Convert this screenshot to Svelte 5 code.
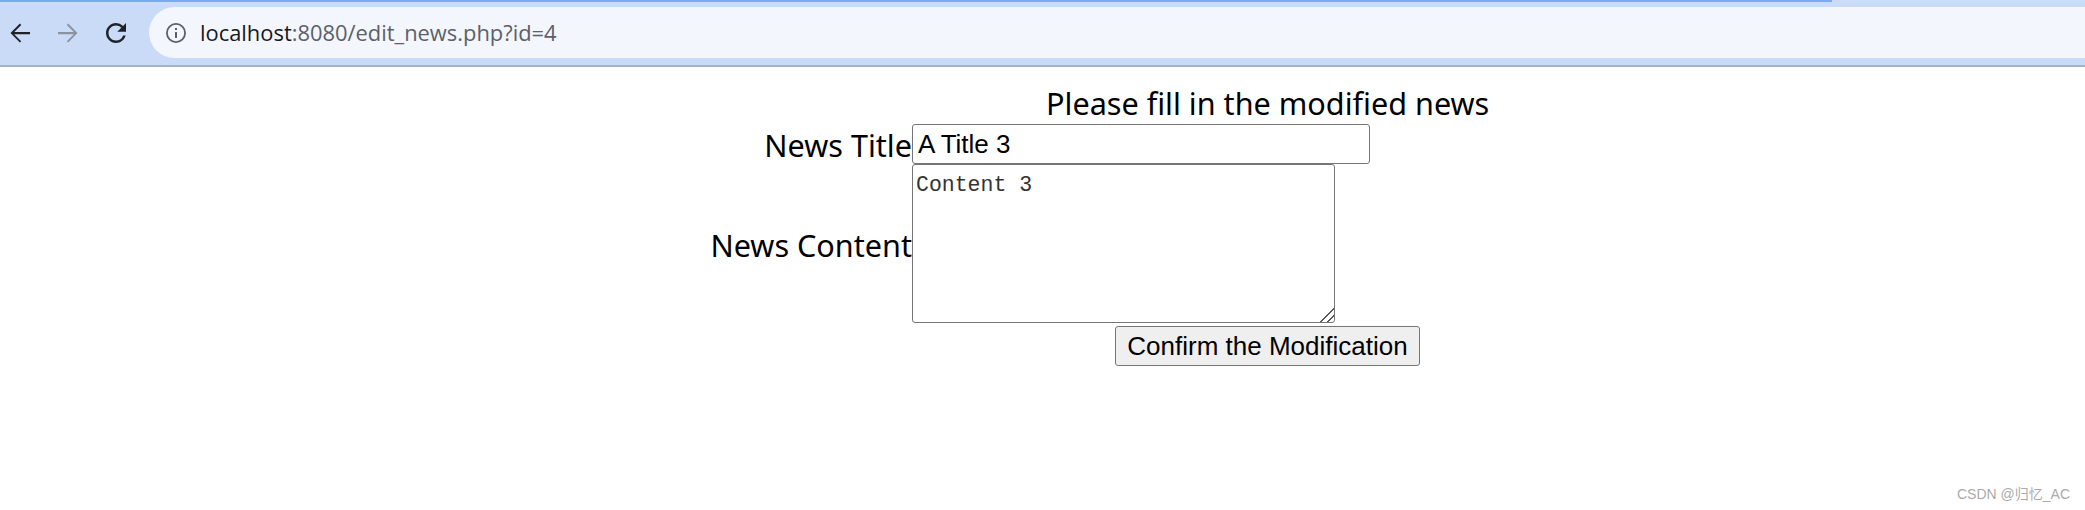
<script>
    let title = "A Title 3";
    let content = "Content 3";
</script>

<style>
    :global(body) {
        background: #fff;
        color: #000;
        font-family: "Noto Sans", "Noto Sans CJK SC", sans-serif;
    }

    .page {
        position: relative;
        height: 510px;
        overflow: hidden;
    }

    .toolbar {
        position: relative;
        display: flex;
        align-items: center;
        height: 65px;
        padding-left: 0;
        background: #c9dbf6;
        border-bottom: 2px solid #a4b1cb;
    }

    .progress {
        position: absolute;
        top: 0;
        left: 0;
        width: 1832px;
        height: 2px;
        background: #7baaf0;
    }

    .nav {
        display: flex;
        justify-content: center;
        width: 48px;
    }

    .nav:first-of-type {
        margin-left: -4px;
    }

    .nav svg {
        width: 30px;
        height: 30px;
        fill: #1f2329;
    }

    .nav.off svg {
        fill: #8a93a1;
    }

    .address {
        display: flex;
        align-items: center;
        flex: 1;
        height: 51px;
        margin-left: 9px;
        padding-left: 15px;
        background: #f3f6fc;
        border-radius: 26px 0 0 26px;
        font-family: "Open Sans", sans-serif;
        font-size: 21.9px;
        color: #5c6068;
    }

    .address svg {
        width: 24px;
        height: 24px;
        margin-right: 12px;
        fill: #5c6068;
    }

    .host {
        color: #16181c;
    }

    form {
        display: grid;
        grid-template-columns: 200px auto;
        justify-content: start;
        justify-items: start;
        align-items: center;
        margin-left: 712px;
        font-size: 30.6px;
    }

    h1 {
        grid-column: 1 / -1;
        margin: 18px 0 3px 334px;
        font-size: 30.6px;
        line-height: 36px;
        font-weight: 400;
    }

    label {
        justify-self: end;
        white-space: nowrap;
        line-height: 36px;
        padding-top: 2px;
    }

    input {
        box-sizing: border-box;
        width: 458px;
        height: 40px;
        margin: 0;
        padding: 0 5px;
        border: 1.5px solid #767676;
        border-radius: 3px;
        font-family: "Liberation Sans", sans-serif;
        font-size: 26px;
    }

    textarea {
        display: block;
        box-sizing: border-box;
        width: 423px;
        height: 159px;
        margin: 0;
        padding: 5px 3px 3px;
        border: 1.5px solid #767676;
        border-radius: 3px;
        font-family: "Liberation Mono", monospace;
        font-size: 21.5px;
        line-height: 30px;
        color: #333;
    }

    textarea::-webkit-resizer {
        background: linear-gradient(135deg, transparent 52%, #555 52%, #555 60%, transparent 60%, transparent 74%, #555 74%, #555 82%, transparent 82%);
    }

    button {
        grid-column: 2;
        box-sizing: border-box;
        width: 305px;
        height: 40px;
        margin: 3px 0 0 203px;
        padding: 0;
        background: #efefef;
        border: 1.5px solid #767676;
        border-radius: 3px;
        font-family: "Liberation Sans", sans-serif;
        font-size: 26px;
        color: #000;
    }

    .mark {
        position: absolute;
        right: 15px;
        bottom: 7px;
        font-family: "Liberation Sans", "Noto Sans CJK SC", sans-serif;
        font-size: 14px;
        color: #aaa;
    }
</style>

<div class="page">
    <header class="toolbar">
        <div class="progress"></div>
        <span class="nav">
            <svg viewBox="0 0 24 24"><path d="M20 11.1H7.4l5.6-5.6L11.9 4.4 4.4 12l7.5 7.6 1.1-1.1-5.6-5.6H20z" /></svg>
        </span>
        <span class="nav off">
            <svg viewBox="0 0 24 24"><path d="M4 11.1h12.6L11 5.5l1.1-1.1 7.5 7.6-7.5 7.6-1.1-1.1 5.6-5.6H4z" /></svg>
        </span>
        <span class="nav">
            <svg viewBox="0 0 24 24"><path d="M17.65 6.35A7.958 7.958 0 0 0 12 4c-4.42 0-7.99 3.58-7.99 8s3.57 8 7.99 8c3.73 0 6.84-2.55 7.73-6h-2.08A5.99 5.99 0 0 1 12 18c-3.31 0-6-2.69-6-6s2.69-6 6-6c1.66 0 3.14.69 4.22 1.78L13 11h7V4l-2.35 2.35z" /></svg>
        </span>
        <div class="address">
            <svg viewBox="0 0 24 24"><path d="M12 2a10 10 0 1 0 0 20 10 10 0 0 0 0-20zm0 18.2a8.2 8.2 0 1 1 0-16.4 8.2 8.2 0 0 1 0 16.4zM11 11h2v6h-2zm0-4h2v2h-2z" /></svg>
            <span><span class="host">localhost</span>:8080/edit_news.php?id=4</span>
        </div>
    </header>

    <form>
        <h1>Please fill in the modified news</h1>
        <label for="title">News Title</label>
        <input id="title" type="text" value={title} />
        <label for="content">News Content</label>
        <textarea id="content" value={content}></textarea>
        <button type="button">Confirm the Modification</button>
    </form>

    <div class="mark">CSDN @归忆_AC</div>
</div>
